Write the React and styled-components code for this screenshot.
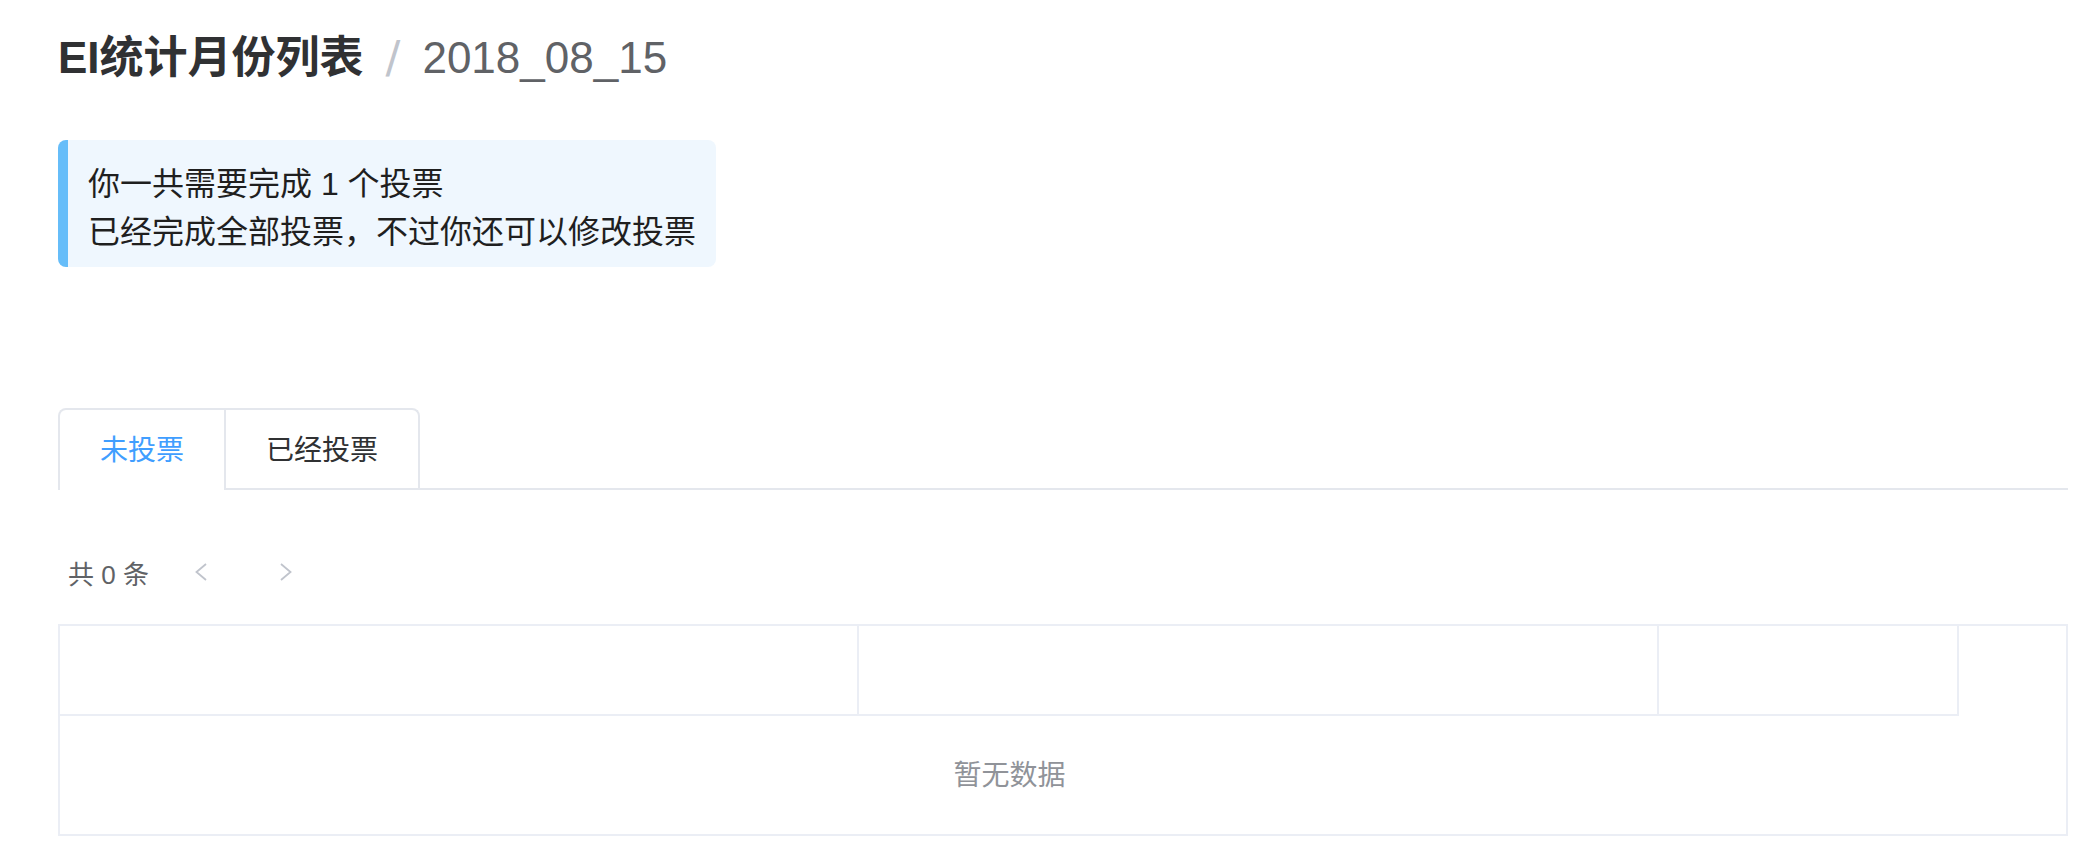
import React from "react";
import styled, { createGlobalStyle } from "styled-components";

const GlobalStyle = createGlobalStyle`
  html, body { margin: 0; padding: 0; background: #fff; }
  body { font-family: "Liberation Sans", "Noto Sans CJK SC", sans-serif; }
  * { box-sizing: border-box; }
`;

const Page = styled.div`
  padding: 28px 32px 0 58px;
`;

const Title = styled.h2`
  margin: 0;
  font-size: 44px;
  line-height: 60px;
  font-weight: 700;
  color: #303133;
  white-space: nowrap;
`;

const Separator = styled.span`
  margin: 0 22px;
  font-family: "DejaVu Sans", sans-serif;
  color: #c0c4cc;
  font-weight: 400;
`;

const Crumb = styled.span`
  font-weight: 400;
  color: #606266;
`;

const Tip = styled.div`
  width: fit-content;
  margin-top: 52px;
  padding: 20px 20px 11px;
  border-left: 10px solid #66bdf9;
  border-radius: 8px;
  background: #eff7fe;
  color: #1f1f1f;
  font-size: 32px;
  line-height: 48px;
`;

const TipLine = styled.p`
  margin: 0;
  white-space: nowrap;
`;

const TabsHeader = styled.div`
  margin-top: 141px;
  display: flex;
  border-bottom: 2px solid #e4e7ed;
`;

const TabsNav = styled.div`
  display: flex;
  border: 2px solid #e4e7ed;
  border-bottom: none;
  border-radius: 8px 8px 0 0;
  margin-bottom: -2px;
`;

const TabItem = styled.div`
  height: 80px;
  padding: 4px 40px 0;
  display: flex;
  align-items: center;
  font-size: 28px;
  line-height: 1;
  color: ${(p) => (p.$active ? "#409eff" : "#303133")};
  border-bottom: 2px solid ${(p) => (p.$active ? "#fff" : "transparent")};
  cursor: pointer;
  & + & {
    border-left: 2px solid #e4e7ed;
  }
`;

const Pagination = styled.div`
  margin-top: 54px;
  height: 56px;
  display: flex;
  align-items: center;
  padding: 0 10px;
`;

const Total = styled.span`
  font-size: 26px;
  color: #606266;
  white-space: nowrap;
  margin-right: 20px;
`;

const PageButton = styled.button`
  width: 71px;
  height: 56px;
  padding: 0 0 0 ${(p) => p.$pad}px;
  border: none;
  background: transparent;
  display: flex;
  align-items: center;
  cursor: not-allowed;
`;

const Table = styled.div`
  margin-top: 24px;
  border: 2px solid #ebeef5;
  background: #fff;
`;

const Row = styled.div`
  display: grid;
  grid-template-columns: 799px 800px 300px 1fr;
`;

const HeaderCell = styled.div`
  height: 90px;
  border-right: 2px solid #ebeef5;
  border-bottom: 2px solid #ebeef5;
`;

const Gutter = styled.div``;

const EmptyBlock = styled.div`
  grid-column: 1 / 4;
  height: 118px;
  display: flex;
  align-items: center;
  justify-content: center;
  padding-top: 2px;
  font-size: 28px;
  line-height: 1;
  color: #909399;
`;

const Chevron = ({ dir }) => (
  <svg width="12" height="18" viewBox="0 0 12 18" fill="none">
    <polyline
      points={dir === "left" ? "11,1 1.5,9 11,17" : "1,1 10.5,9 1,17"}
      stroke="#c0c4cc"
      strokeWidth="1.8"
      strokeLinejoin="miter"
    />
  </svg>
);

export default function App() {
  const [tab, setTab] = React.useState(0);
  const tabs = ["未投票", "已经投票"];
  return (
    <Page>
      <GlobalStyle />
      <Title>
        EI统计月份列表
        <Separator>/</Separator>
        <Crumb>2018_08_15</Crumb>
      </Title>
      <Tip>
        <TipLine>你一共需要完成 1 个投票</TipLine>
        <TipLine>已经完成全部投票，不过你还可以修改投票</TipLine>
      </Tip>
      <TabsHeader>
        <TabsNav>
          {tabs.map((t, i) => (
            <TabItem key={t} $active={i === tab} onClick={() => setTab(i)}>
              {t}
            </TabItem>
          ))}
        </TabsNav>
      </TabsHeader>
      <Pagination>
        <Total>共 0 条</Total>
        <PageButton $pad={26} disabled>
          <Chevron dir="left" />
        </PageButton>
        <PageButton $pad={40} disabled>
          <Chevron dir="right" />
        </PageButton>
      </Pagination>
      <Table>
        <Row>
          <HeaderCell />
          <HeaderCell />
          <HeaderCell />
          <Gutter />
        </Row>
        <Row>
          <EmptyBlock>暂无数据</EmptyBlock>
        </Row>
      </Table>
    </Page>
  );
}
